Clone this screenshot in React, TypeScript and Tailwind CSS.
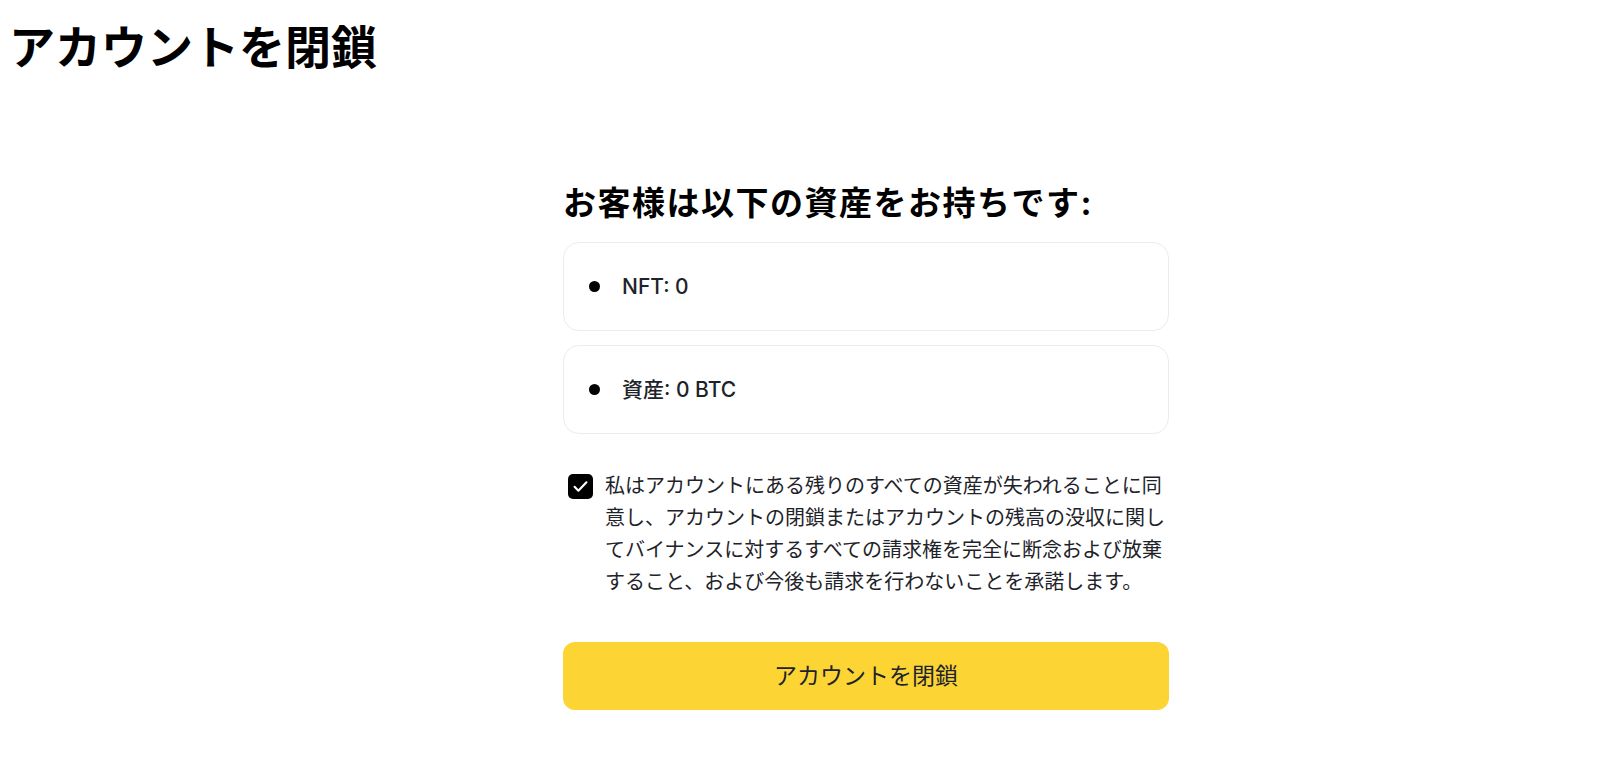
import React, { useState } from 'react';

const font = { fontFamily: 'Inter, "Noto Sans CJK JP", sans-serif' };

const AssetCard = ({ label }: { label: string }) => (
  <div className="flex h-[89px] items-center rounded-2xl border border-[#eaecef] bg-white pl-[25px]">
    <span className="h-[11px] w-[11px] rounded-full bg-black"></span>
    <span className="ml-[22px] text-[21px] font-medium text-[#1e2329]">{label}</span>
  </div>
);

export default function App() {
  const [agreed, setAgreed] = useState(true);

  return (
    <div className="min-h-[758px] bg-white text-black" style={font}>
      {/* Page title */}
      <h1 className="pl-[9px] pt-[20px] text-[46px] font-bold leading-[54px]">アカウントを閉鎖</h1>

      <div className="flex justify-center pl-[114px] pt-[109px]">
        <div className="w-[606px]">
          <h2 className="text-[33px] font-bold leading-[40px] tracking-[1.5px]">お客様は以下の資産をお持ちです:</h2>

          {/* Assets */}
          <div className="mt-[19px] flex flex-col gap-[14px]">
            <AssetCard label="NFT: 0" />
            <AssetCard label="資産: 0 BTC" />
          </div>

          {/* Agreement */}
          <label className="mt-[36px] flex cursor-pointer items-start gap-[12px] pl-[5px]">
            <button
              type="button"
              onClick={() => setAgreed(!agreed)}
              className={`mt-[4px] flex h-[25px] w-[25px] shrink-0 items-center justify-center rounded-[5px] ${agreed ? 'bg-black' : 'border-2 border-gray-400 bg-white'}`}
            >
              {agreed && (
                <svg width="19" height="19" viewBox="0 0 16 16" fill="none">
                  <path d="M3 8.3l3.2 3.2L13 4.5" stroke="white" strokeWidth="1.8" strokeLinecap="round" strokeLinejoin="round" />
                </svg>
              )}
            </button>
            <p className="w-[566px] shrink-0 text-[20px] leading-[32px] text-[#1e2329]">
              私はアカウントにある残りのすべての資産が失われることに同意し、アカウントの閉鎖またはアカウントの残高の没収に関してバイナンスに対するすべての請求権を完全に断念および放棄すること、および今後も請求を行わないことを承諾します。
            </p>
          </label>

          <button
            type="button"
            className="mt-[44px] flex h-[68px] w-full items-center justify-center rounded-xl bg-[#fcd535] text-[23px] text-[#1e2329]"
          >
            アカウントを閉鎖
          </button>
        </div>
      </div>
    </div>
  );
}
